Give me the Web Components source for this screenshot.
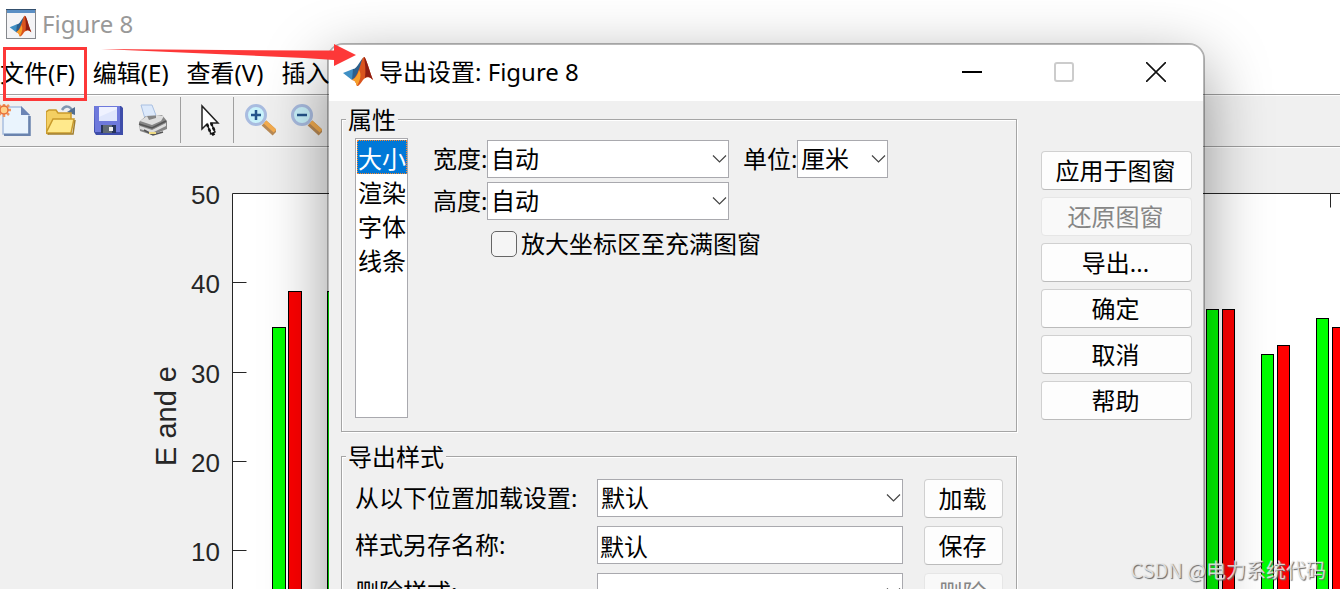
<!DOCTYPE html>
<html lang="zh-CN">
<head>
<meta charset="utf-8">
<title>Figure 8</title>
<style>
  html, body { margin: 0; height: 100%; }
  body {
    overflow: hidden;
    background: #f0f0f0;
    color: #000;
    font: 24px/34px "Noto Sans", "Noto Sans CJK SC", sans-serif;
  }
</style>
</head>
<body>
<app-desktop></app-desktop>
<script>
const MEMBRANE = `
  <path d="M1 17 11 13 17 17 10 24 Z" fill="#3f8fc4"/>
  <path d="M11 13C15 13 17 6 21 2L20 12 14 21 10 24Z" fill="#2b5f8c"/>
  <path d="M10 24C14 22 17 14 19 7 20 3 21 1 22 1 24 1 27 14 31 24 27 20 24 21 21 24 18 28 17 30 15 30 14 27 13 24 10 24Z" fill="#d9541e"/>
  <path d="M22 1C24 1 27 14 31 24 27 20 25 20 23 22 24 14 23 7 22 1Z" fill="#8e1d12"/>
  <path d="M10 24C14 22 16 18 17 14 20 18 18 25 15 30 14 27 13 24 10 24Z" fill="#f6a02c"/>`;

function define(name, html, setup) {
  const template = document.createElement('template');
  template.innerHTML = html;
  customElements.define(name, class extends HTMLElement {
    constructor() {
      super();
      this.attachShadow({ mode: 'open' }).append(template.content.cloneNode(true));
    }
    connectedCallback() {
      if (setup) setup(this, this.shadowRoot);
    }
  });
}

/* Push button */
define('ui-button', `
<style>
  :host { display: block; }
  button {
    box-sizing: border-box; display: block; width: 100%; height: 39px; padding: 0 2px 0 0;
    border: 1px solid #d0d0d0; border-bottom-color: #bbb; border-radius: 4px;
    background: #fdfdfd; color: #000; font: inherit; line-height: 34px; text-align: center;
  }
  button:disabled { border-color: #e6e6e6; background: #f9f9f9; color: #868686; }
</style>
<button type="button"><slot></slot></button>`, (el, root) => {
  root.querySelector('button').disabled = el.hasAttribute('disabled');
});

/* Labelled drop-down */
define('ui-combo', `
<style>
  :host { display: grid; grid-template-columns: var(--label, auto) minmax(0, 1fr); align-items: center; }
  label { white-space: nowrap; }
  .box { position: relative; }
  select {
    box-sizing: border-box; display: block; width: 100%; height: 38px; margin: 0; padding: 0 24px 0 3px;
    appearance: none; border: 1px solid #a9a9ae; border-radius: 0; background: #fff;
    color: #000; font: inherit; line-height: 34px;
  }
  svg { position: absolute; right: 2px; top: 14px; pointer-events: none; }
</style>
<label for="field"></label>
<div class="box">
  <select id="field"><option></option></select>
  <svg width="15" height="10" viewBox="0 0 15 10" fill="none" stroke="#444" stroke-width="1.2"><path d="M1 1.5 7.5 8 14 1.5"/></svg>
</div>`, (el, root) => {
  root.querySelector('label').textContent = el.getAttribute('label');
  root.querySelector('option').textContent = el.getAttribute('value');
});

/* Labelled text box */
define('ui-text', `
<style>
  :host { display: grid; grid-template-columns: var(--label, auto) minmax(0, 1fr); align-items: center; }
  label { white-space: nowrap; }
  input {
    box-sizing: border-box; width: 100%; height: 38px; margin: 0; padding: 0 2px;
    border: 1px solid #a9a9ae; border-radius: 0; background: #fff; color: #000; font: inherit;
  }
</style>
<label for="field"></label>
<input id="field" type="text">`, (el, root) => {
  root.querySelector('label').textContent = el.getAttribute('label');
  root.querySelector('input').value = el.getAttribute('value');
});

define('ui-check', `
<style>
  :host { display: block; }
  label { display: flex; align-items: center; gap: 4px; }
  input {
    box-sizing: border-box; appearance: none; width: 26px; height: 26px; margin: 0;
    border: 1px solid #666; border-radius: 5px; background: #f5f5f5;
  }
</style>
<label><input type="checkbox"><slot></slot></label>`);

/* Etched group frame with a caption */
define('ui-group', `
<style>
  :host { display: block; }
  fieldset {
    box-sizing: border-box; margin: 0; min-width: 0; padding: 1px 13px 13px;
    border: 1px solid #a5a5a5; box-shadow: 1px 1px #fff, inset 1px 1px #fff;
  }
  legend { margin-left: -9px; padding: 0 2px; background: #f0f0f0; height: 36px; line-height: 38px; }
</style>
<fieldset><legend></legend><slot></slot></fieldset>`, (el, root) => {
  root.querySelector('legend').textContent = el.getAttribute('caption');
});

define('category-list', `
<style>
  :host { display: block; }
  select {
    box-sizing: border-box; display: block; width: 53px; height: 280px; margin: 0; padding: 1px 0 1px 1px;
    border: 1px solid #a9a9ae; border-radius: 0; outline: none; background: #fff;
    font: inherit; overflow: hidden; scrollbar-width: none;
  }
  option { box-sizing: border-box; height: 34px; min-height: 34px; padding: 0 1px; line-height: 32px; color: #000; }
  option:checked {
    background: linear-gradient(#0078d7, #0078d7); color: #fff; -webkit-text-fill-color: #fff;
    outline: 1px dotted #ff8728; outline-offset: -1px;
  }
</style>
<select size="8" aria-label="属性">
  <option selected>大小</option><option>渲染</option><option>字体</option><option>线条</option>
</select>`);

define('figure-titlebar', `
<style>
  :host { display: flex; align-items: center; gap: 6px; height: 48px; padding-left: 6px; background: #fff; color: #999; }
</style>
<svg width="30" height="30" viewBox="0 0 30 30">
  <rect x=".5" y=".5" width="29" height="29" fill="#f4f4f6" stroke="#85888d"/>
  <rect x="1" y="1" width="28" height="3" fill="#5b8fc4"/>
  <path d="M0 .5H30" stroke="#34506e"/>
  <g transform="translate(3 6) scale(.72)">${MEMBRANE}</g>
</svg>
<span><slot></slot></span>`);

define('figure-menubar', `
<style>
  nav { box-sizing: border-box; display: flex; gap: 18px; height: 46px; padding-top: 4px; background: #fff; align-items: center; }
  :host { display: block; border-bottom: 1px solid #a0a0a0; }
  button { margin: 0; padding: 0; border: 0; background: none; color: #000; font: inherit; line-height: 34px; white-space: nowrap; }
</style>
<nav>
  <button type="button">文件(F)</button><button type="button">编辑(E)</button>
  <button type="button">查看(V)</button><button type="button">插入</button>
</nav>`);

define('figure-toolbar', `
<style>
  :host {
    box-sizing: border-box; display: flex; align-items: center; height: 52px; padding-bottom: 2px;
    border-top: 1px solid #fff; border-bottom: 1px solid #a0a0a0; background: #f0f0f0;
  }
  button { margin: 0; padding: 0; border: 0; background: none; display: block; width: 46px; height: 32px; }
  svg { display: block; width: 32px; height: 32px; }
  i { width: 1px; height: 46px; margin: 0 10px 0 2px; background: #a0a0a0; }
  .narrow { width: 40px; }
</style>
<button type="button" aria-label="新建"><svg viewBox="0 0 32 32">
  <path d="M3 3H21L29 11V30H3Z" fill="#eaf4fd" stroke="#a9bfdf" stroke-width="1.500"/>
  <path d="M29.500 12V31H4" fill="none" stroke="#6a83ad" stroke-width="2.500"/>
  <path d="M21 2V11H30Z" fill="#6c85b5"/>
  <g stroke="#f0935c" stroke-width="2.500"><path d="M4 -1V13M-3 6H11M-1 1 9 11M9 1-1 11"/></g>
  <circle cx="4" cy="6" r="4" fill="#ffd18a" stroke="#e7703b" stroke-width="1.500"/>
</svg></button>
<button type="button" aria-label="打开"><svg viewBox="0 0 32 32">
  <path d="M16 6C19 1 24 2 26 6" fill="none" stroke="#8197b1" stroke-width="2.500"/>
  <path d="M21 8 29 3V11Z" fill="#526e91"/>
  <path d="M0 29V8L3 6H10L12 9H25V17H10L2 30Z" fill="#f4cf62" stroke="#c99a2c" stroke-width="1.500"/>
  <path d="M7 15H28L25 29H0Z" fill="#ffe98c" stroke="#c99a2c" stroke-width="1.500"/>
  <path d="M2 30H27L29 16" fill="none" stroke="#a27f2c" stroke-width="1.500"/>
</svg></button>
<button type="button" aria-label="保存"><svg viewBox="0 0 32 32">
  <path d="M2 2H29L31 4V31H4L2 28Z" fill="#3e4da9"/>
  <path d="M2 2H28V28H3Z" fill="#6e79dc"/>
  <path d="M7 3H25V17H7Z" fill="#eff2ff"/><path d="M7 13 25 5V17H7Z" fill="#dfe6fc"/>
  <path d="M9 21H24V29H9Z" fill="#27345c"/><path d="M11 21H20V29H11Z" fill="#606a74"/>
  <path d="M17 23H21V27H17Z" fill="#eee"/>
</svg></button>
<button type="button" class="narrow" aria-label="打印"><svg viewBox="0 0 32 32">
  <path d="M3 1H14L19 14 8 18Z" fill="#dce9fb" stroke="#a9c0e2"/>
  <path d="M1 18 8 12 24 11 29 17V25L14 31 2 27Z" fill="#858585"/>
  <path d="M2 17 9 12 11 16 18 14 18 11 26 12 23 17 14 21Z" fill="#dedede"/>
  <path d="M2 22 14 26 28 19V22L14 29 2 25Z" fill="#dcdcdc"/>
  <path d="M1 20 14 24 28 17M6 26 15 31 25 28" fill="none" stroke="#555" stroke-width="1.500"/>
  <path d="M11 29H18" stroke="#eeda84" stroke-width="2"/>
</svg></button>
<i></i>
<button type="button" class="narrow" aria-label="选择"><svg viewBox="0 0 32 32">
  <path d="M11 2V25L16 20 20 30 24 28 20 19H27Z" fill="#fff" stroke="#222" stroke-width="1.500"/>
  <path d="M16 20 20 30M20 19 24 28M21 31 24 29" stroke="#111" stroke-width="2.500" stroke-dasharray="3 2"/>
</svg></button>
<i></i>
<button type="button" aria-label="放大"><svg viewBox="0 0 32 32">
  <path d="M20 19 31 29" stroke="#b98a55" stroke-width="7"/><path d="M21 18 31 27" stroke="#f3ac4f" stroke-width="4"/>
  <circle cx="12" cy="11" r="9.500" fill="#c9f2fb" stroke="#a9bce0" stroke-width="3"/>
  <path d="M7 11H17M12 6V16" stroke="#24558c" stroke-width="2.500"/>
</svg></button>
<button type="button" aria-label="缩小"><svg viewBox="0 0 32 32">
  <path d="M20 19 31 29" stroke="#b98a55" stroke-width="7"/><path d="M21 18 31 27" stroke="#f3ac4f" stroke-width="4"/>
  <circle cx="12" cy="11" r="9.500" fill="#c9f2fb" stroke="#a9bce0" stroke-width="3"/>
  <path d="M7 11H17" stroke="#24558c" stroke-width="2.500"/>
</svg></button>`);

/* Bar chart: value 50 lies at y = 46, ten units are 89 px */
define('bar-plot', `
<style>
  :host { display: block; flex: 1; min-height: 0; border-top: 1px solid #fff; overflow: hidden; }
  svg { display: block; width: 100%; height: 100%; overflow: hidden; }
  text { font-family: "Liberation Sans", Arial, sans-serif; font-size: 26px; fill: #262626; }
  .name { font-size: 29px; }
</style>
<svg><rect x="233" y="46" width="100%" height="100%" fill="#fff"/><g id="bars" stroke="#000"></g>
<path id="axes" fill="none" stroke="#262626"/><g id="ticks" text-anchor="end"></g>
<text class="name" text-anchor="middle" transform="translate(176 268) rotate(-90)">E and e</text></svg>`, (el, root) => {
  const Y = v => Math.round(46 + (50 - v) * 8.925) - .5;
  const bars = [[272, 35, 0], [288, 39, 1], [327, 39, 0], [1206, 37, 0], [1222, 37, 1], [1261, 32, 0], [1277, 33, 1], [1316, 36, 0], [1332, 35, 1]];
  root.getElementById('bars').innerHTML = bars.map(([x, v, red]) =>
    `<rect x="${x + .5}" y="${Y(v)}" width="${x < 400 ? 13 : 12}" height="600" fill="${red ? '#f00' : '#0f0'}"/>`).join('');
  const marks = [40, 30, 20, 10];
  root.getElementById('axes').setAttribute('d', `M4000 ${Y(50)}H232.5V1000M1330.5 ${Y(50)}v14` + marks.map(v => `M232.5 ${Y(v)}h14`).join(''));
  root.getElementById('ticks').innerHTML = [50, ...marks].map(v => `<text x="220" y="${Y(v) + 10}">${v}</text>`).join('');
});

define('figure-window', `
<style>:host { display: flex; flex-direction: column; height: 100%; }</style>
<figure-titlebar>Figure 8</figure-titlebar>
<figure-menubar></figure-menubar>
<figure-toolbar></figure-toolbar>
<bar-plot></bar-plot>`);

define('dialog-titlebar', `
<style>
  :host { box-sizing: border-box; display: flex; align-items: center; height: 56px; padding: 0 1px 2px 13px; background: #fff; }
  span { flex: 1; padding-left: 5px; white-space: nowrap; }
  button { width: 92px; height: 54px; margin: 0; padding: 0; border: 0; background: none; display: grid; place-items: center; }
</style>
<svg width="32" height="32" viewBox="0 0 32 32">${MEMBRANE}</svg>
<span><slot></slot></span>
<button type="button" aria-label="最小化"><svg width="20" height="20"><path d="M0 10H20" stroke="#000" stroke-width="2"/></svg></button>
<button type="button" aria-label="最大化" disabled><svg width="20" height="20"><rect x="1" y="1" width="18" height="18" rx="2" fill="none" stroke="#ccc" stroke-width="2"/></svg></button>
<button type="button" aria-label="关闭"><svg width="20" height="20"><path d="M0 0 20 20M20 0 0 20" stroke="#111" stroke-width="1.600"/></svg></button>`);

define('export-dialog', `
<style>
  :host {
    display: block; border: 2px solid rgba(0, 0, 0, .28); border-radius: 16px; background: #f0f0f0 padding-box;
    overflow: hidden; box-shadow: 0 20px 64px rgba(0, 0, 0, .4);
  }
  .body { display: grid; grid-template-columns: minmax(0, 1fr) 151px; gap: 24px; padding: 0 11px 100px 12px; }
  .groups { display: grid; gap: 6px; }
  .props { display: flex; gap: 25px; }
  .fields { display: grid; gap: 4px; align-content: start; padding-top: 2px; }
  .size { display: flex; gap: 14px; }
  .wide { width: 296px; --label: 54px; }
  .unit { width: 145px; --label: 54px; }
  ui-check { padding: 3px 0 0 58px; }
  .actions { display: grid; gap: 7px; align-content: start; padding-top: 50px; }
  .style { display: grid; grid-template-columns: minmax(0, 1fr) 79px; gap: 8px 21px; align-items: start; padding-top: 4px; --label: 242px; }
</style>
<dialog-titlebar>导出设置: Figure 8</dialog-titlebar>
<div class="body">
  <div class="groups">
    <ui-group caption="属性"><div class="props">
      <category-list></category-list>
      <div class="fields">
        <div class="size"><ui-combo class="wide" label="宽度:" value="自动"></ui-combo><ui-combo class="unit" label="单位:" value="厘米"></ui-combo></div>
        <ui-combo class="wide" label="高度:" value="自动"></ui-combo>
        <ui-check>放大坐标区至充满图窗</ui-check>
      </div>
    </div></ui-group>
    <ui-group caption="导出样式"><div class="style">
      <ui-combo label="从以下位置加载设置:" value="默认"></ui-combo><ui-button>加载</ui-button>
      <ui-text label="样式另存名称:" value="默认"></ui-text><ui-button>保存</ui-button>
      <ui-combo label="删除样式:" value=""></ui-combo><ui-button disabled>删除</ui-button>
    </div></ui-group>
  </div>
  <div class="actions">
    <ui-button>应用于图窗</ui-button><ui-button disabled>还原图窗</ui-button><ui-button>导出...</ui-button>
    <ui-button>确定</ui-button><ui-button>取消</ui-button><ui-button>帮助</ui-button>
  </div>
</div>`);

define('app-desktop', `
<style>
  :host { display: block; position: relative; height: 100vh; overflow: hidden; }
  export-dialog { position: absolute; left: 327px; right: 135px; top: 43px; }
  .frame { position: absolute; left: 3px; top: 47px; width: 78px; height: 48px; border: 3px solid #fd3838; }
  .arrow { position: absolute; left: 100px; top: 43px; }
  .mark {
    position: absolute; right: 14px; bottom: 4px; white-space: nowrap;
    font: 20px/30px "Noto Sans CJK SC", sans-serif;
    color: rgba(235, 235, 235, .85); text-shadow: 1px 1px 1px #666;
  }
</style>
<figure-window></figure-window>
<export-dialog></export-dialog>
<div class="frame"></div>
<svg class="arrow" width="258" height="24"><path d="M1 6 204 7.500 234 7.500V1L256 12 234 23V17L204 15Z" fill="#fd3838"/></svg>
<div class="mark">CSDN @电力系统代码</div>`);
</script>
</body>
</html>
